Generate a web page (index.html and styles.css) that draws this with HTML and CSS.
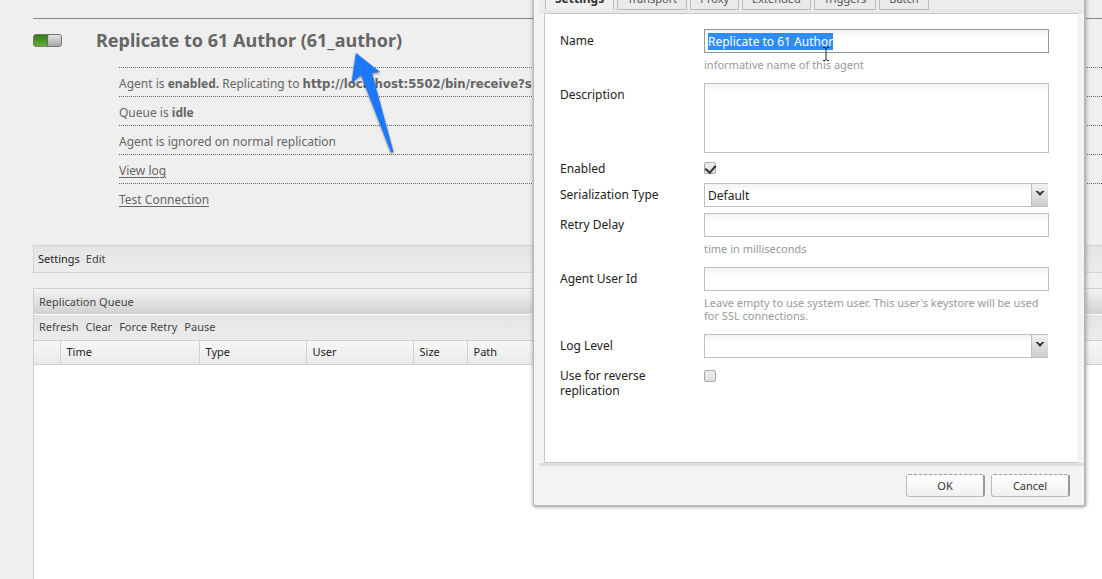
FILE: index.html
```html
<!DOCTYPE html>
<html lang="en">
<head>
    <meta charset="UTF-8">
    <meta name="viewport" content="width=device-width, initial-scale=1.0">
    <title>Replicate to 61 Author</title>
    <link rel="stylesheet" href="styles.css">
</head>
<body>
    <div class="page">
        <div class="agent">
            <div class="status"><span class="knob"></span></div>
            <div class="agent-info">
                <h1>Replicate to 61 Author (61_author)</h1>
                <ul class="agent-details">
                    <li>Agent is <b>enabled.</b> Replicating to <b class="url">http://localhost:5502/bin/receive?s</b></li>
                    <li>Queue is <b>idle</b></li>
                    <li>Agent is ignored on normal replication</li>
                    <li><a href="#">View log</a></li>
                    <li><a href="#">Test Connection</a></li>
                </ul>
            </div>
        </div>

        <div class="settings-bar">
            <span class="bar-title">Settings</span>
            <button class="tool" type="button">Edit</button>
        </div>

        <div class="queue">
            <h2>Replication Queue</h2>
            <div class="queue-tools">
                <button class="tool" type="button">Refresh</button>
                <button class="tool" type="button">Clear</button>
                <button class="tool" type="button">Force Retry</button>
                <button class="tool" type="button">Pause</button>
            </div>
            <table class="queue-table">
                <colgroup>
                    <col class="col-mark">
                    <col class="col-time">
                    <col class="col-type">
                    <col class="col-user">
                    <col class="col-size">
                    <col>
                </colgroup>
                <thead>
                    <tr><th></th><th>Time</th><th>Type</th><th>User</th><th>Size</th><th>Path</th></tr>
                </thead>
                <tbody></tbody>
            </table>
        </div>
    </div>

    <!-- arrow pointing at the agent name -->
    <svg class="pointer" width="60" height="116" viewBox="0 0 60 116">
        <path d="M16 5 L40 24 L32 25 L53.500 104 L51 104.500 L21 27 L11.500 35 Z" fill="#1c78ff"/>
    </svg>

    <form class="dialog">
        <div class="tabs">
            <button type="button" class="tab active">Settings</button>
            <button type="button" class="tab">Transport</button>
            <button type="button" class="tab">Proxy</button>
            <button type="button" class="tab">Extended</button>
            <button type="button" class="tab">Triggers</button>
            <button type="button" class="tab">Batch</button>
        </div>
        <div class="fields">
            <div class="row">
                <label for="name">Name</label>
                <div class="field">
                    <input type="text" id="name" class="text name-input" value="Replicate to 61 Author">
                    <p class="hint">informative name of this agent</p>
                </div>
            </div>
            <div class="row">
                <label for="description">Description</label>
                <div class="field"><textarea id="description" class="text"></textarea></div>
            </div>
            <div class="row check-row">
                <label for="enabled">Enabled</label>
                <input type="checkbox" id="enabled" checked>
            </div>
            <div class="row">
                <label for="serialization">Serialization Type</label>
                <div class="field combo">
                    <select id="serialization" class="text"><option>Default</option></select>
                    <span class="trigger"><svg width="10" height="7" viewBox="0 0 10 7"><path d="M0.500 1 L3 1 L5 3 L7 1 L9.500 1 L5 6 Z" fill="#333"/></svg></span>
                </div>
            </div>
            <div class="row">
                <label for="retry">Retry Delay</label>
                <div class="field">
                    <input type="text" id="retry" class="text">
                    <p class="hint">time in milliseconds</p>
                </div>
            </div>
            <div class="row">
                <label for="user">Agent User Id</label>
                <div class="field">
                    <input type="text" id="user" class="text">
                    <p class="hint">Leave empty to use system user. This user's keystore will be used for SSL connections.</p>
                </div>
            </div>
            <div class="row">
                <label for="log">Log Level</label>
                <div class="field combo">
                    <select id="log" class="text"><option></option></select>
                    <span class="trigger"><svg width="10" height="7" viewBox="0 0 10 7"><path d="M0.500 1 L3 1 L5 3 L7 1 L9.500 1 L5 6 Z" fill="#333"/></svg></span>
                </div>
            </div>
            <div class="row">
                <label for="reverse">Use for reverse replication</label>
                <div class="check-cell"><input type="checkbox" id="reverse"></div>
            </div>
        </div>
        <div class="buttons">
            <button type="button">OK</button>
            <button type="button">Cancel</button>
        </div>
    </form>

    <!-- text cursor -->
    <svg class="ibeam" width="8" height="16" viewBox="0 0 8 16">
        <path d="M1 1.500 H3 L4 2.500 L5 1.500 H7 M4 2 V14 M1 14.500 H3 L4 13.500 L5 14.500 H7" fill="none" stroke="#222"/>
    </svg>

    <script>
        document.getElementById('name').focus();
        document.getElementById('name').select();
    </script>
</body>
</html>
```

FILE: styles.css
```css
* {
    box-sizing: border-box;
}

body {
    margin: 0;
    height: 100vh;
    overflow: hidden;
    position: relative;
    background: #efefef;
    color: #666;
    font-family: "Noto Sans", Tahoma, sans-serif;
    font-size: 12px;
    line-height: 15px;
}

button, input, select, textarea {
    font: inherit;
    color: inherit;
}

.page {
    display: flex;
    flex-direction: column;
    height: 100%;
    padding: 18px 0 0 33px;
}

/* agent summary */
.agent {
    display: flex;
    height: 227px;
    border-top: 1px solid #888;
}

.status {
    width: 29px;
    height: 13px;
    margin: 15px 34px 0 0;
    border: 1px solid #777;
    border-radius: 3px;
    background: linear-gradient(#2f7d14, #63ad3c);
}

.knob {
    display: block;
    width: 14px;
    height: 11px;
    margin-left: auto;
    border-left: 1px solid #666;
    border-radius: 2px;
    background: linear-gradient(#e2e2e2, #aaa);
}

.agent-info {
    flex: 1;
    min-width: 0;
}

h1 {
    margin: 9px 0 15px;
    font-size: 18px;
    line-height: 24px;
}

.agent-details {
    margin: 0 0 0 23px;
    padding: 0;
    list-style: none;
    white-space: nowrap;
}

.agent-details li {
    height: 29px;
    padding-top: 8px;
    border-top: 1px dotted #666;
}

.agent-details a {
    color: #666;
    text-underline-offset: 2px;
}

.url {
    font-family: "DejaVu Sans Condensed", "DejaVu Sans", sans-serif;
    font-size: 13px;
}

/* bars */
.settings-bar {
    display: flex;
    align-items: center;
    gap: 6px;
    height: 28px;
    margin-bottom: 15px;
    padding: 0 4px 2px;
    border: 1px solid #d4d4d4;
    border-right: 0;
    background: linear-gradient(#e4e4e4, #ececec);
    font-size: 11px;
}

.bar-title {
    color: #222;
}

.tool {
    padding: 0;
    border: 0;
    background: none;
    color: #444;
}

.queue {
    flex: 1;
    border: 1px solid #d0d0d0;
    border-width: 1px 0 0 1px;
    background: #fff;
    font-size: 11px;
}

.queue h2 {
    margin: 0;
    padding: 5px;
    border-bottom: 1px solid #fafafa;
    background: linear-gradient(#f2f2f2, #d2d2d2);
    color: #444;
    font-size: 11px;
    font-weight: normal;
    line-height: 15px;
}

.queue-tools {
    display: flex;
    gap: 7px;
    padding: 4px 5px 6px;
    border-bottom: 1px solid #d0d0d0;
    background: linear-gradient(#e4e4e4, #ececec);
}

.queue-table {
    width: 100%;
    table-layout: fixed;
    border-collapse: collapse;
}

.queue-table th {
    height: 23px;
    padding: 0 6px 1px;
    border-bottom: 1px solid #d0d0d0;
    border-left: 1px solid #d0d0d0;
    background: linear-gradient(#f7f7f7, #e9e9e9);
    color: #222;
    font-weight: normal;
    text-align: left;
}

.queue-table th:first-child {
    border-left: 0;
}

.col-mark { width: 26px; }
.col-time { width: 139px; }
.col-type { width: 107px; }
.col-user { width: 107px; }
.col-size { width: 54px; }

/* dialog, scrolled past its title bar */
.dialog {
    position: absolute;
    top: -15px;
    right: 16px;
    width: 553px;
    padding-left: 5px;
    border: 1px solid #b8b8b8;
    border-width: 0 2px 2px 1px;
    border-radius: 0 0 3px 3px;
    background: #f3f3f3;
    box-shadow: 0 0 4px rgba(0, 0, 0, 0.35);
    color: #222;
}

.tabs {
    display: flex;
    gap: 3px;
    height: 28px;
    padding: 0 6px;
    border-bottom: 3px solid #e8e8e8;
    background: #ececec;
    font-size: 11px;
}

.tab {
    padding: 4px 9px 0;
    border: 1px solid #bbb;
    border-top: 0;
    background: #eaeaea;
    color: #555;
    line-height: 20px;
}

.tab.active {
    padding: 4px 9px 0;
    background: #f0f0f0;
    border-bottom-color: #f0f0f0;
    color: #333;
    font-size: 12px;
    font-weight: bold;
}

.fields {
    display: flex;
    flex-direction: column;
    gap: 6px;
    height: 450px;
    margin: 0 5px;
    padding: 15px 29px 0 15px;
    border: 1px solid #c8c8c8;
    border-right-color: #eee;
    background: #fff;
}

.row {
    display: grid;
    grid-template-columns: 144px 1fr;
}

.row label {
    padding: 4px 20px 0 0;
}

.text {
    display: block;
    width: 100%;
    height: 24px;
    margin: 0;
    padding: 0 3px;
    border: 1px solid #c0c0c0;
    border-radius: 0;
    outline: none;
    background: linear-gradient(#f3f3f3, #fff 8px);
}

textarea.text {
    height: 70px;
    resize: none;
}

.name-input {
    border-color: #8f9a94;
}

.name-input::selection {
    background: #2e8cf7;
    color: #fff;
}

.hint {
    margin: 5px 0 6px;
    color: #999;
    font-size: 11px;
    line-height: 13px;
}

.check-row {
    height: 18px;
    align-items: center;
}

.check-row label {
    padding: 0;
}

.check-cell {
    padding-top: 6px;
}

input[type="checkbox"] {
    display: grid;
    place-items: center;
    appearance: none;
    width: 12px;
    height: 12px;
    margin: 0;
    border: 1px solid #aaa;
    border-radius: 2px;
    background: linear-gradient(#eee, #ddd);
}

input[type="checkbox"]:checked::before {
    content: "";
    width: 5px;
    height: 8px;
    margin-bottom: 2px;
    border: solid #333;
    border-width: 0 2px 2px 0;
    transform: rotate(40deg);
}

.combo {
    position: relative;
    padding-right: 1px;
}

.combo select {
    appearance: none;
    border-right: 0;
}

.trigger {
    position: absolute;
    top: 0;
    right: 1px;
    display: flex;
    align-items: center;
    justify-content: center;
    width: 17px;
    height: 24px;
    padding-bottom: 3px;
    border: 1px solid #c0c0c0;
    border-right: 0;
    background: linear-gradient(#f2f2f2, #ccc);
    pointer-events: none;
}

.buttons {
    display: flex;
    justify-content: flex-end;
    gap: 6px;
    padding: 8px 14px;
    border-top: 3px solid #dedede;
    font-size: 11px;
}

.buttons button {
    width: 79px;
    height: 23px;
    padding: 0;
    border: 1px solid #bbb;
    border-top: 1px dashed #999;
    border-right: 2px solid #999;
    border-radius: 3px;
    background: linear-gradient(#fff, #f0f0f0);
    color: #333;
}

/* drawn over the page */
.pointer {
    position: absolute;
    top: 48px;
    left: 340px;
    filter: drop-shadow(0 1px 1px rgba(0, 0, 0, 0.5));
}

.ibeam {
    position: absolute;
    top: 46px;
    left: 822px;
}
```
